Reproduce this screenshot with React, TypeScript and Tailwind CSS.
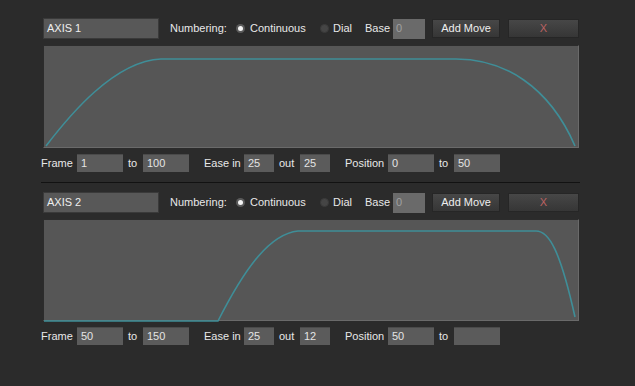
import type { ReactNode } from "react";

interface Axis {
  name: string;
  frameFrom: string;
  frameTo: string;
  easeIn: string;
  easeOut: string;
  posFrom: string;
  posTo: string;
  curve: string;
  graphH: string;
}

const AXES: Axis[] = [
  {
    name: "AXIS 1",
    frameFrom: "1",
    frameTo: "100",
    easeIn: "25",
    easeOut: "25",
    posFrom: "0",
    posTo: "50",
    curve: "M2,100 C25,70 70,15 117,13 L412,13 C460,13 505,40 531,100",
    graphH: "h-[103px]",
  },
  {
    name: "AXIS 2",
    frameFrom: "50",
    frameTo: "150",
    easeIn: "25",
    easeOut: "12",
    posFrom: "50",
    posTo: "",
    curve: "M0,101 L174,101 C200,50 225,14 254,11 L492,11 C505,11 516,30 531,97",
    graphH: "h-[102px]",
  },
];

function Field({ value, w }: { value: string; w: string }) {
  return (
    <div
      className={`${w} h-[18px] bg-[#5b5b5b] border-t border-[#4a4a4a] pl-[4px] flex items-center text-[#e4e4e4]`}
    >
      {value}
    </div>
  );
}

function Label({ children, w }: { children: ReactNode; w: string }) {
  return <span className={`${w} whitespace-nowrap text-[#e8e8e8]`}>{children}</span>;
}

function AxisBlock({ axis }: { axis: Axis }) {
  return (
    <div className="flex flex-col">
      {/* header row */}
      <div className="flex items-center h-[21px]">
        <div className="ml-[2px] w-[116px] h-[21px] bg-[#585858] border border-[#3a3a3a] pl-[3px] flex items-center text-[#eeeeee]">
          {axis.name}
        </div>
        <Label w="ml-[11px] w-[54px]">Numbering:</Label>
        <span className="ml-[12px] w-[9px] h-[9px] rounded-full bg-[#5a5a5a] flex items-center justify-center">
          <span className="w-[5px] h-[5px] rounded-full bg-[#f4f4f4]" />
        </span>
        <Label w="ml-[5px] w-[54px]">Continuous</Label>
        <span className="ml-[16px] w-[9px] h-[9px] rounded-full bg-[#454545] border border-[#3a3a3a]" />
        <Label w="ml-[4px] w-[18px]">Dial</Label>
        <Label w="ml-[14px] w-[26px]">Base</Label>
        <div className="ml-[2px] w-[32px] h-[20px] bg-[#6a6a6a] pl-[3px] flex items-center text-[#a0a0a0]">
          0
        </div>
        <button className="ml-[7px] w-[68px] h-[19px] bg-gradient-to-b from-[#474747] to-[#363636] border border-[#262626] text-[#eeeeee] flex items-center justify-center">
          Add Move
        </button>
        <button className="ml-[8px] w-[71px] h-[19px] bg-gradient-to-b from-[#474747] to-[#363636] border border-[#262626] text-[#bb6262] flex items-center justify-center">
          X
        </button>
      </div>

      {/* graph */}
      <div
        className={`mt-[6px] ml-[2px] w-[536px] ${axis.graphH} bg-[#565656] border border-[#2c2c2c] border-r-[#6a6a6a] border-b-[#6a6a6a]`}
      >
        <svg width="534" height="101" viewBox="0 0 534 101" className="block overflow-visible">
          <path d={axis.curve} fill="none" stroke="#3f8e98" strokeWidth="1.6" />
        </svg>
      </div>

      {/* controls row */}
      <div className="mt-[6px] flex items-center h-[18px]">
        <Label w="w-[30px]">Frame</Label>
        <div className="ml-[6px]"><Field value={axis.frameFrom} w="w-[46px]" /></div>
        <Label w="ml-[5px] w-[10px]">to</Label>
        <div className="ml-[5px]"><Field value={axis.frameTo} w="w-[46px]" /></div>
        <Label w="ml-[15px] w-[35px]">Ease in</Label>
        <div className="ml-[5px]"><Field value={axis.easeIn} w="w-[30px]" /></div>
        <Label w="ml-[5px] w-[16px]">out</Label>
        <div className="ml-[5px]"><Field value={axis.easeOut} w="w-[30px]" /></div>
        <Label w="ml-[15px] w-[38px]">Position</Label>
        <div className="ml-[5px]"><Field value={axis.posFrom} w="w-[46px]" /></div>
        <Label w="ml-[5px] w-[11px]">to</Label>
        <div className="ml-[4px]"><Field value={axis.posTo} w="w-[46px]" /></div>
      </div>
    </div>
  );
}

export default function App() {
  return (
    <div
      className="w-[635px] h-[386px] bg-[#2b2b2b] pl-[41px] pt-[18px] text-[11px] overflow-hidden"
      style={{ fontFamily: '"Liberation Sans", Arial, sans-serif' }}
    >
      <AxisBlock axis={AXES[0]} />
      <div className="mt-[10px] w-[539px] h-px bg-[#121212]" />
      <div className="mt-[9px]">
        <AxisBlock axis={AXES[1]} />
      </div>
    </div>
  );
}
